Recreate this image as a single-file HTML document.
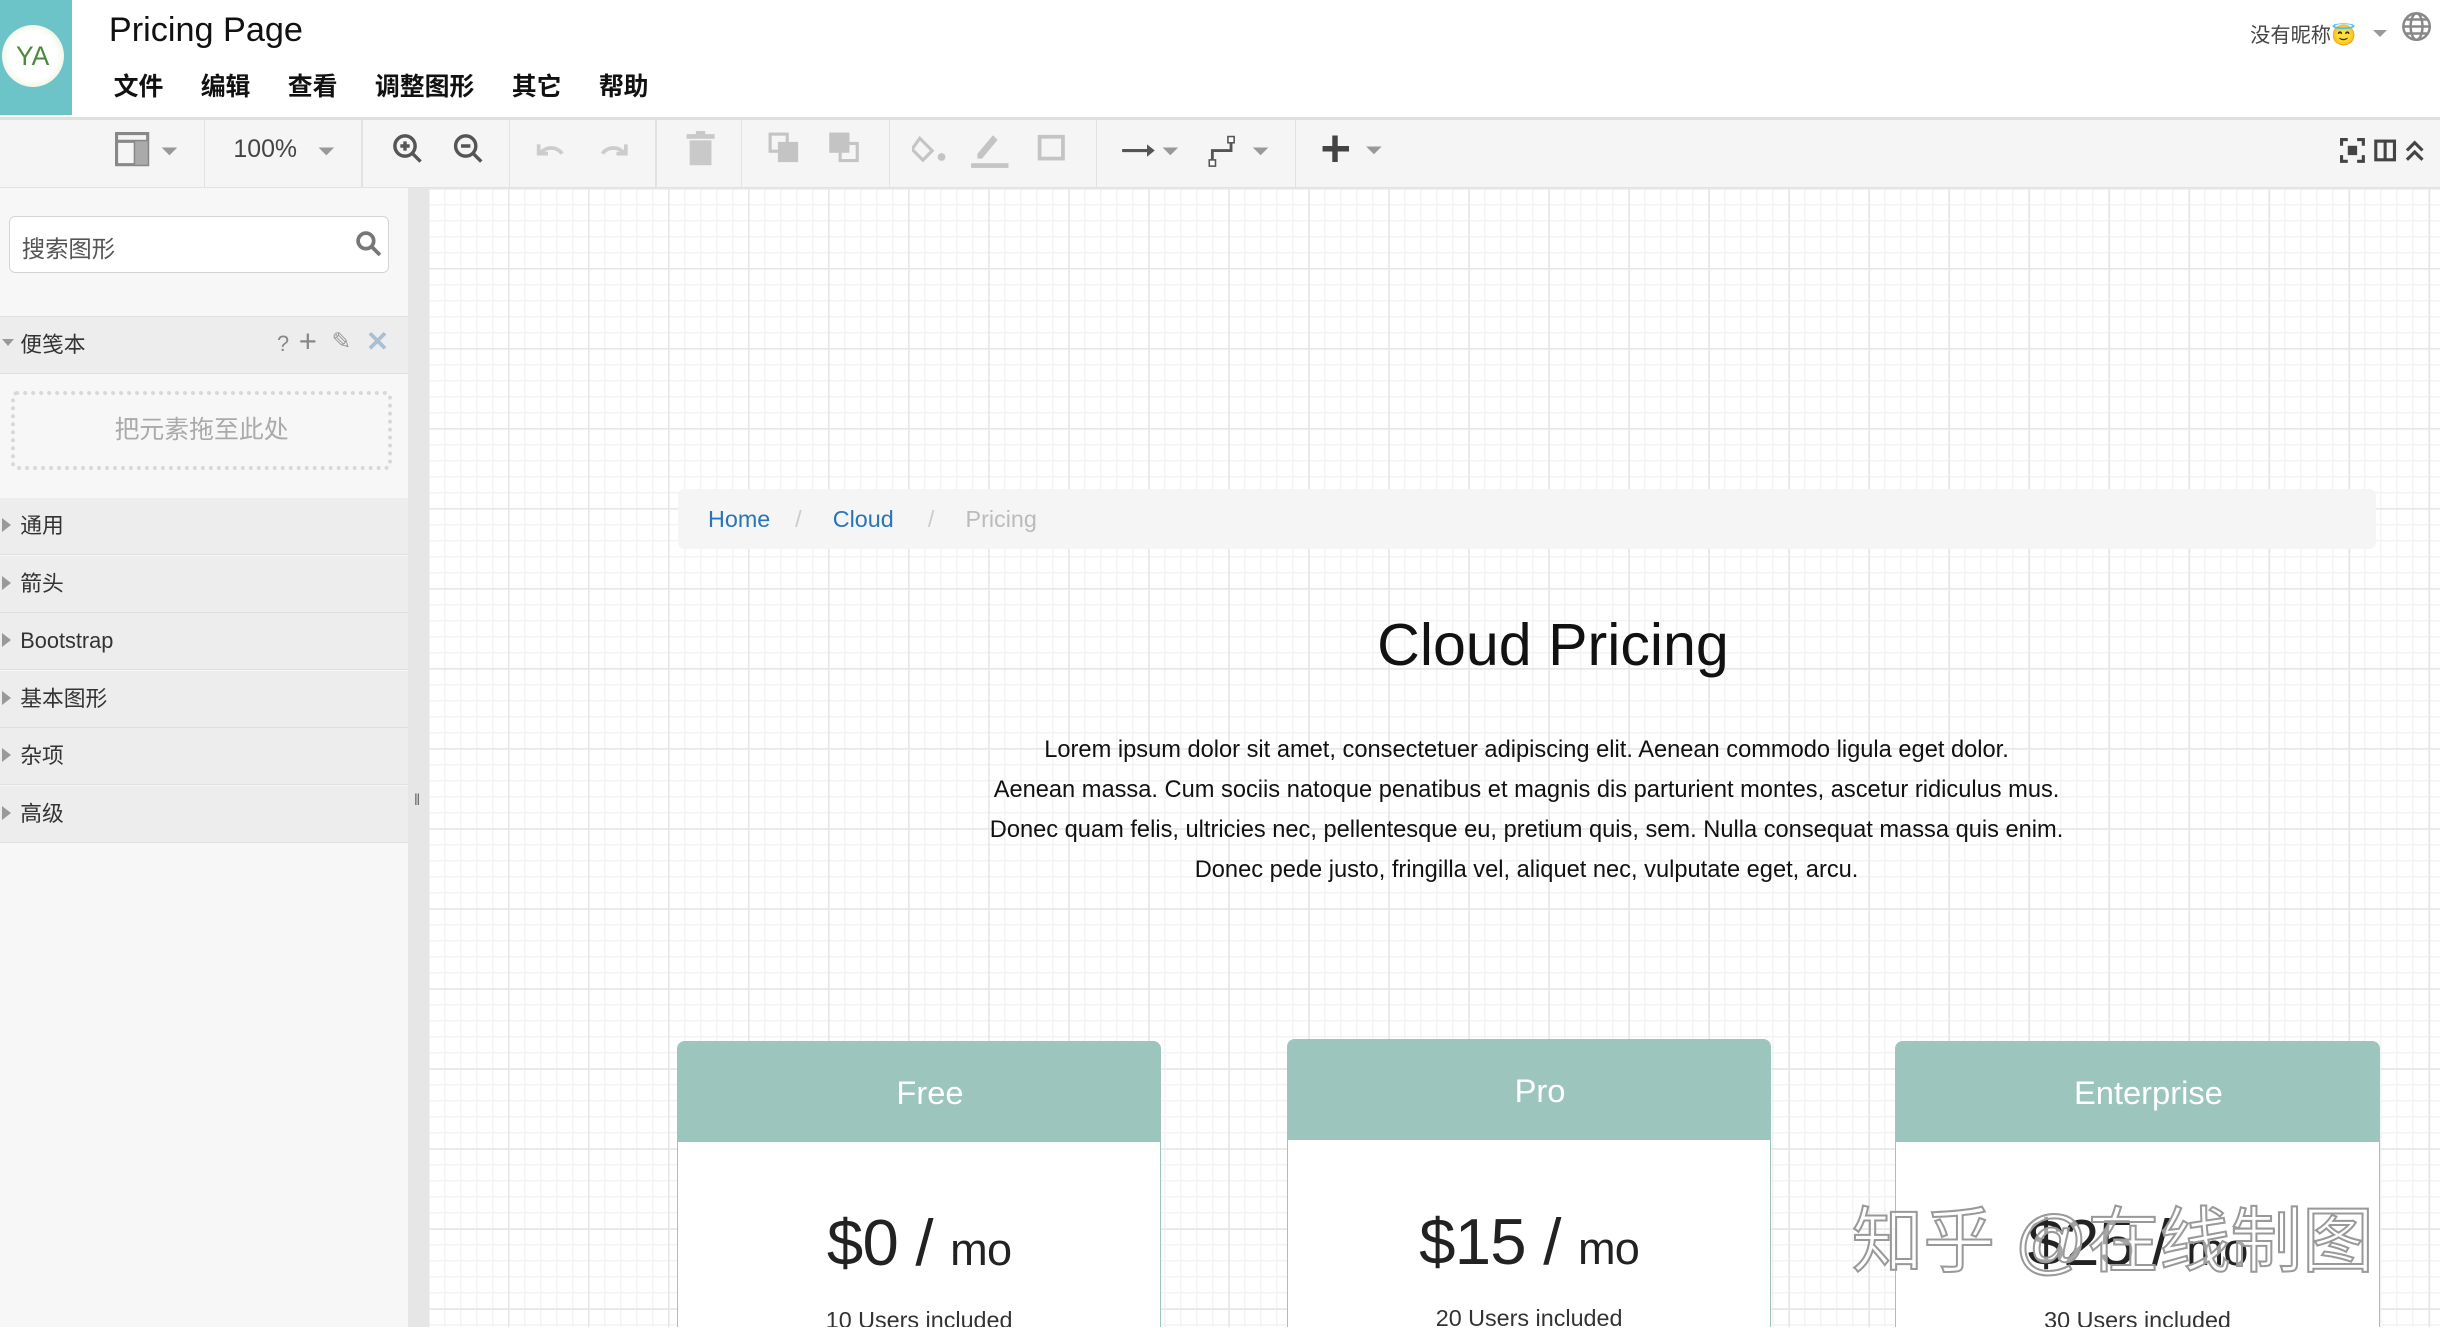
<!DOCTYPE html>
<html><head><meta charset="utf-8"><style>
html{zoom:1.55612;overflow:hidden}
body{margin:0;width:1568px;height:853px;overflow:hidden;position:relative;font-family:"Liberation Sans","Noto Sans CJK SC",sans-serif;background:#fff}
.a{position:absolute}
.logo{left:0;top:0;width:46px;height:74px;background:#6cc3c8}
.logo div{position:absolute;left:1px;top:16px;width:40px;height:40px;border-radius:50%;background:radial-gradient(#fff 55%,#e8f2d8 80%,#bcd8a8);color:#4a8a3a;font-size:17px;text-align:center;line-height:40px}
.menu span{margin-right:24px}
.tb{left:0;top:75px;width:1568px;height:43px;background:#f5f5f5;border-top:2px solid #e0e0e0;border-bottom:3px solid #e2e2e2}
.sep{position:absolute;top:0;width:1px;height:43px;background:#e2e2e2}
.side{left:0;top:121px;width:262px;height:732px;background:#f7f7f7}
.split{left:262px;top:121px;width:13px;height:732px;background:#e6e6e6}
.canvas{left:275px;top:121px;width:1293px;height:732px;background-color:#fff;
background-image:linear-gradient(#e6e6e6 1px,transparent 1px),linear-gradient(90deg,#e6e6e6 1px,transparent 1px),linear-gradient(#f3f3f3 1px,transparent 1px),linear-gradient(90deg,#f3f3f3 1px,transparent 1px);
background-size:51.43px 51.43px,51.43px 51.43px,10.29px 10.29px,10.29px 10.29px;background-position:0 0}
.row{position:absolute;left:0;width:262px;height:36px;background:#ededed;border-bottom:1px solid #e0e0e0;font-size:14px;color:#333;line-height:36px}
.row:before{content:"";position:absolute;left:1px;top:13px;border-left:6px solid #999;border-top:5px solid transparent;border-bottom:5px solid transparent}
.row span{margin-left:13px}
.clip{left:0;top:0;width:1568px;height:853px;overflow:hidden}
.card{position:absolute;width:310px;height:200px;border:1px solid #9cc5bd;border-radius:5px 5px 0 0;background:#fff;text-align:center}
.card .h{height:64px;background:#9cc5bd;color:#fff;font-size:21px;line-height:66px;border-radius:4px 4px 0 0;padding-left:14px}
.card .p{font-size:42px;color:#222;margin-top:41px;letter-spacing:-0.5px}
.card .p small{font-size:29px}
.card .u{font-size:15px;color:#333;margin-top:17px}
</style></head><body>
<div class="a logo"><div>YA</div></div>
<div class="a" style="left:70px;top:7px;font-size:22px;color:#111">Pricing Page</div>
<div class="a menu" style="left:73px;top:43px;font-size:16px;color:#111;font-weight:bold">
<span>文件</span><span>编辑</span><span>查看</span><span>调整图形</span><span>其它</span><span>帮助</span></div>
<div class="a" style="left:1446px;top:12px;font-size:13px;color:#444">没有昵称😇</div>
<div class="a" style="left:1525px;top:19px;border-top:5px solid #999;border-left:5px solid transparent;border-right:5px solid transparent"></div>
<svg class="a" style="left:1543px;top:7px" width="20" height="20" viewBox="0 0 20 20" fill="none" stroke="#888" stroke-width="1.6"><circle cx="10" cy="10" r="8.5"/><ellipse cx="10" cy="10" rx="3.8" ry="8.5"/><path d="M1.5 10h17M3 5.5h14M3 14.5h14"/></svg>

<div class="a tb">
<div class="sep" style="left:131px"></div><div class="sep" style="left:232px"></div><div class="sep" style="left:327px"></div><div class="sep" style="left:421px"></div><div class="sep" style="left:476px"></div><div class="sep" style="left:571px"></div><div class="sep" style="left:704px"></div><div class="sep" style="left:832px"></div>
<svg class="a" style="left:74px;top:8px" width="44" height="24"><rect x="1" y="1" width="20" height="20" fill="none" stroke="#888" stroke-width="2"/><path d="M1 6h20M13 6v15" stroke="#888" stroke-width="2"/><rect x="13" y="6" width="8" height="15" fill="#aaa"/><path d="M30 10h10l-5 5z" fill="#999"/></svg>
<div class="a" style="left:150px;top:10px;font-size:16px;color:#444">100%</div>
<svg class="a" style="left:204px;top:17px" width="12" height="8"><path d="M1 1h10l-5 5z" fill="#999"/></svg>
<svg class="a" style="left:251px;top:8px" width="70" height="24" fill="none" stroke="#555" stroke-width="2.2"><circle cx="9" cy="9" r="6.5"/><path d="M14 14l5 5M6 9h6M9 6v6"/><circle cx="48" cy="9" r="6.5"/><path d="M53 14l5 5M45 9h6"/></svg>
<svg class="a" style="left:343px;top:10px" width="64" height="20" fill="none" stroke="#ccc" stroke-width="2.4"><path d="M4 12a8 7 0 0 1 14 0M3 6v6h6"/><path d="M58 12a8 7 0 0 0-14 0M59 6v6h-6"/></svg>
<svg class="a" style="left:440px;top:7px" width="20" height="24"><rect x="3" y="6" width="14" height="16" fill="#c9c9c9"/><rect x="1" y="2" width="18" height="3" fill="#c9c9c9"/><rect x="7" y="0" width="6" height="3" fill="#c9c9c9"/></svg>
<svg class="a" style="left:493px;top:7px" width="64" height="24" fill="none" stroke="#c4c4c4" stroke-width="2"><rect x="2" y="2" width="11" height="11"/><rect x="8" y="8" width="11" height="11" fill="#c4c4c4"/><rect x="41" y="2" width="11" height="11" fill="#c4c4c4"/><rect x="47" y="8" width="11" height="11"/></svg>
<svg class="a" style="left:586px;top:6px" width="106" height="28"><path d="M5 6l8 8-6 6-7-7z" fill="none" stroke="#c4c4c4" stroke-width="2"/><circle cx="19" cy="18" r="2.5" fill="#c4c4c4"/><path d="M42 16l10-12 3 3-10 12h-3z" fill="#c4c4c4"/><rect x="38" y="22" width="24" height="3" fill="#c4c4c4"/><rect x="82" y="5" width="15" height="14" fill="none" stroke="#c4c4c4" stroke-width="2.4"/></svg>
<svg class="a" style="left:719px;top:10px" width="100" height="22"><path d="M2 10h18" stroke="#555" stroke-width="2"/><path d="M18 6l5 4-5 4z" fill="#555"/><path d="M28 8h10l-5 5z" fill="#999"/><path d="M60 17v-7h12v-7" fill="none" stroke="#555" stroke-width="1.8"/><rect x="58" y="16" width="4" height="4" fill="#fff" stroke="#555"/><rect x="70" y="1" width="4" height="4" fill="#fff" stroke="#555"/><path d="M86 8h10l-5 5z" fill="#999"/></svg>
<svg class="a" style="left:849px;top:9px" width="42" height="22"><path d="M9 1v17M1 9.5h17" stroke="#444" stroke-width="3.5"/><path d="M29 8h10l-5 5z" fill="#999"/></svg>
<svg class="a" style="left:1504px;top:12px" width="58" height="18" fill="none" stroke="#444" stroke-width="2"><path d="M1 5V1h4M11 1h4v4M15 11v4h-4M5 15H1v-4"/><rect x="6" y="6" width="4" height="4" fill="#444"/><rect x="23" y="2" width="12" height="12"/><path d="M29 2v12"/><path d="M43 8l5-5 5 5M43 14l5-5 5 5"/></svg>
</div>

<div class="a side">
<div class="a" style="left:6px;top:18px;width:243px;height:35px;background:#fff;border:1px solid #d4d4d4;border-radius:4px"></div>
<div class="a" style="left:14px;top:27px;font-size:15px;color:#555">搜索图形</div>
<svg class="a" style="left:228px;top:27px" width="18" height="18" fill="none" stroke="#777" stroke-width="2.4"><circle cx="7" cy="7" r="5"/><path d="M11 11l5 5"/></svg>
<div class="a" style="left:0;top:82px;width:262px;height:36px;background:#ededed;border-top:1px solid #e0e0e0;border-bottom:1px solid #e0e0e0"></div>
<div class="a" style="left:1px;top:97px;border-top:5px solid #999;border-left:4px solid transparent;border-right:4px solid transparent"></div>
<div class="a" style="left:13px;top:90px;font-size:14px;color:#333">便笺本</div>
<div class="a" style="left:178px;top:92px;font-size:14px;color:#888">?</div>
<div class="a" style="left:192px;top:87px;font-size:20px;color:#888">+</div>
<div class="a" style="left:213px;top:89px;font-size:15px;color:#999">✎</div>
<div class="a" style="left:235px;top:88px;font-size:18px;color:#a9bfd4;font-weight:bold">✕</div>
<div class="a" style="left:7px;top:130px;width:240px;height:46px;border:3px dotted #d8d8d8;border-radius:4px;text-align:center;line-height:46px;font-size:16px;color:#aaa">把元素拖至此处</div>
<div class="row" style="top:199px"><span>通用</span></div>
<div class="row" style="top:236px"><span>箭头</span></div>
<div class="row" style="top:273px"><span>Bootstrap</span></div>
<div class="row" style="top:310px"><span>基本图形</span></div>
<div class="row" style="top:347px"><span>杂项</span></div>
<div class="row" style="top:384px"><span>高级</span></div>
</div>
<div class="a split"><div class="a" style="left:4px;top:388px;font-size:10px;color:#666">‖</div></div>
<div class="a canvas"></div>

<div class="a" style="left:436px;top:314px;width:1091px;height:39px;background:#f5f5f5;border-radius:4px;font-size:15px;line-height:39px">
<span style="margin-left:19px;color:#2a74b8">Home</span><span style="color:#ccc;margin:0 20px 0 16px">/</span><span style="color:#2a74b8">Cloud</span><span style="color:#ccc;margin:0 20px 0 22px">/</span><span style="color:#bbb">Pricing</span></div>
<div class="a" style="left:698px;top:392px;width:600px;text-align:center;font-size:38px;color:#111">Cloud Pricing</div>
<div class="a" style="left:561px;top:469px;width:840px;text-align:center;font-size:15.2px;line-height:25.7px;color:#111">Lorem ipsum dolor sit amet, consectetuer adipiscing elit. Aenean commodo ligula eget dolor.<br>Aenean massa. Cum sociis natoque penatibus et magnis dis parturient montes, ascetur ridiculus mus.<br>Donec quam felis, ultricies nec, pellentesque eu, pretium quis, sem. Nulla consequat massa quis enim.<br>Donec pede justo, fringilla vel, aliquet nec, vulputate eget, arcu.</div>

<div class="a clip">
<div class="card" style="left:435px;top:669px"><div class="h">Free</div><div class="p">$0 / <small>mo</small></div><div class="u">10 Users included</div></div>
<div class="card" style="left:827px;top:668px"><div class="h">Pro</div><div class="p">$15 / <small>mo</small></div><div class="u">20 Users included</div></div>
<div class="card" style="left:1218px;top:669px"><div class="h">Enterprise</div><div class="p">$25 / <small>mo</small></div><div class="u">30 Users included</div></div>
<div class="a" style="left:1190px;top:760px;font-size:46px;color:rgba(255,255,255,0.6);-webkit-text-stroke:1.3px #999;white-space:nowrap">知乎 @在线制图</div>
</div>
</body></html>
